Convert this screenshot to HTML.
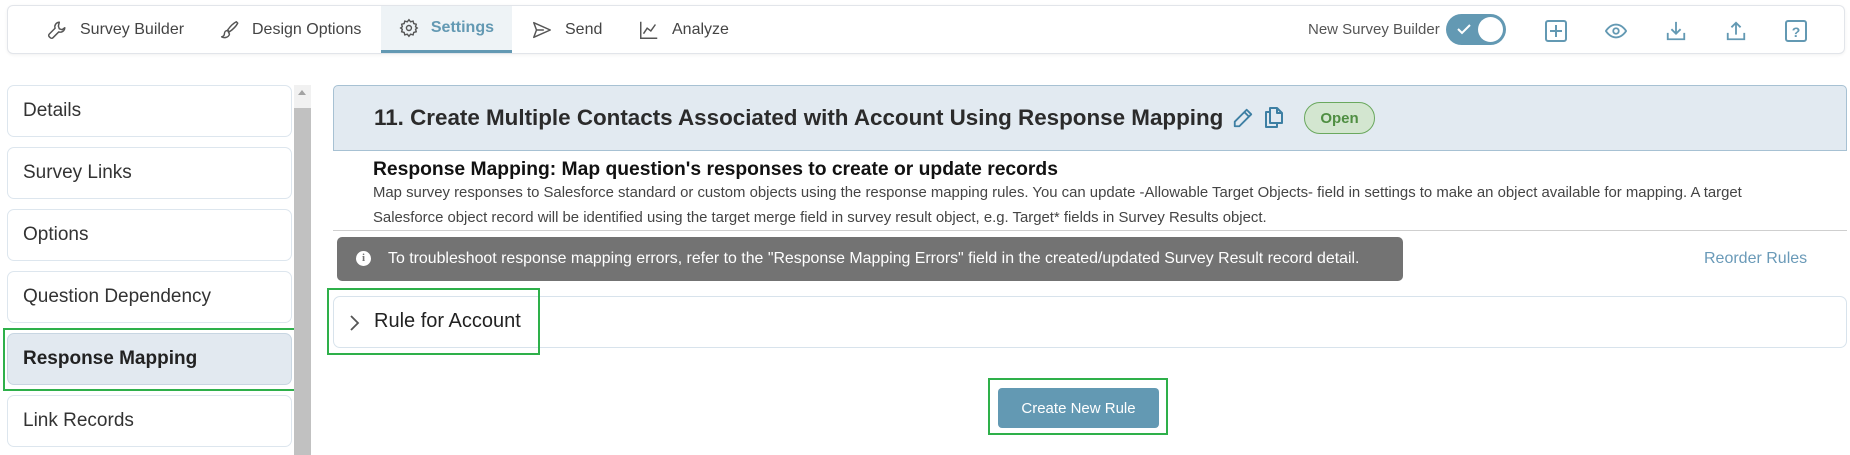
<!DOCTYPE html>
<html><head><meta charset="utf-8"><style>
*{box-sizing:border-box;margin:0;padding:0}
body{width:1850px;height:455px;background:#fff;font-family:"Liberation Sans",sans-serif;color:#333;position:relative;overflow:hidden}
.abs{position:absolute}
.nav{left:7px;top:5px;width:1838px;height:49px;border:1px solid #e2e5ea;border-radius:6px;background:#fff;box-shadow:0 1px 3px rgba(0,0,0,.06)}
.tab{position:absolute;top:0;height:47px;display:flex;align-items:center;font-size:16px;color:#444}
.tab svg{margin-right:12px}
.set{background:#eef3f6;border-bottom:3px solid #6399b3;color:#6399b3;font-weight:bold;padding:0 18px 0 18px}
.side{left:7px;width:285px;height:52px;border:1px solid #dde6ee;border-radius:7px;font-size:19px;color:#333;padding-left:15px;display:flex;align-items:center;background:#fff}
.gbox{border:2px solid #2eb04a}
.ic{position:absolute;top:14px}
</style></head><body>
<div class="abs nav">
 <div class="tab" style="left:38px"><svg width="22" height="22" viewBox="0 0 24 24" fill="none" stroke="#555" stroke-width="1.6" stroke-linejoin="round"><path d="M14.5 3.5a5 5 0 0 0-4.6 6.6L3.5 16.5a2 2 0 0 0 0 2.8l1.2 1.2a2 2 0 0 0 2.8 0l6.4-6.4a5 5 0 0 0 6.6-4.6l-3 2.2-3-1-1-3z"/></svg>Survey Builder</div>
 <div class="tab" style="left:210px"><svg width="22" height="22" viewBox="0 0 24 24" fill="none" stroke="#555" stroke-width="1.6" stroke-linejoin="round"><path d="M20 3c-3 1.5-7 5.5-9.5 9l2 2c3.5-2.5 7.5-6.5 9-9.5z M10.5 12.5c-2 0-3.5 1.5-3.5 3.5 0 1.5-1 3-3 3.5 2.5 1.5 7.5 1 8.5-3z"/></svg>Design Options</div>
 <div class="tab set" style="left:373px;width:131px"><svg width="20" height="20" viewBox="0 0 24 24" fill="none" stroke="#555" stroke-width="1.7"><circle cx="12" cy="12" r="3"/><path d="M12 2l2 2.5 3-.8.8 3 3 .8-.8 3L22 12l-2 1.5.8 3-3 .8-.8 3-3-.8L12 22l-2-2.5-3 .8-.8-3-3-.8.8-3L2 12l2-1.5-.8-3 3-.8.8-3 3 .8z"/></svg>Settings</div>
 <div class="tab" style="left:523px"><svg width="22" height="22" viewBox="0 0 24 24" fill="none" stroke="#555" stroke-width="1.6" stroke-linejoin="round"><path d="M3 4l18 8-18 8 3-8zM6 12h8"/></svg>Send</div>
 <div class="tab" style="left:630px"><svg width="22" height="22" viewBox="0 0 24 24" fill="none" stroke="#555" stroke-width="1.6"><path d="M3 3v18h18M6 16l4-6 4 3 5-7"/></svg>Analyze</div>
 <div class="tab" style="left:1300px;font-size:15px;color:#555">New Survey Builder</div>
 <div class="abs" style="left:1438px;top:8px;width:60px;height:31px;border-radius:16px;background:#6399b3">
  <svg class="abs" style="left:10px;top:8px" width="16" height="14" viewBox="0 0 16 14" fill="none" stroke="#fff" stroke-width="2"><path d="M2 7l4 4 8-8"/></svg>
  <div class="abs" style="right:3px;top:3px;width:25px;height:25px;border-radius:50%;background:#fff"></div></div>
 <svg class="ic" style="left:1537px" width="22" height="22" viewBox="0 0 22 22" fill="none" stroke="#6399b3" stroke-width="2"><rect x="1" y="1" width="20" height="20" rx="2"/><path d="M11 5v12M5 11h12"/></svg>
 <svg class="ic" style="left:1597px" width="22" height="22" viewBox="0 0 24 24" fill="none" stroke="#6399b3" stroke-width="2"><path d="M1 12s4-7 11-7 11 7 11 7-4 7-11 7S1 12 1 12z"/><circle cx="12" cy="12" r="3"/></svg>
 <svg class="ic" style="left:1657px" width="22" height="22" viewBox="0 0 24 24" fill="none" stroke="#6399b3" stroke-width="2"><path d="M3 14v7h18v-7M12 2v13M7 10l5 5 5-5"/></svg>
 <svg class="ic" style="left:1717px" width="22" height="22" viewBox="0 0 24 24" fill="none" stroke="#6399b3" stroke-width="2"><path d="M3 14v7h18v-7M12 16V3M7 8l5-5 5 5"/></svg>
 <svg class="ic" style="left:1777px" width="22" height="22" viewBox="0 0 22 22" fill="none" stroke="#6399b3" stroke-width="2"><rect x="1" y="1" width="20" height="20" rx="2"/><text x="11" y="17" text-anchor="middle" font-size="14" font-family="Liberation Sans" font-weight="bold" fill="#6399b3" stroke="none">?</text></svg>
</div>

<div class="abs side" style="top:85px">Details</div>
<div class="abs side" style="top:147px">Survey Links</div>
<div class="abs side" style="top:209px">Options</div>
<div class="abs side" style="top:271px">Question Dependency</div>
<div class="abs side" style="top:333px;background:#e2e9f0;font-weight:bold;color:#222;border-color:#c8d6e2">Response Mapping</div>
<div class="abs side" style="top:395px">Link Records</div>
<div class="abs gbox" style="left:3px;top:328px;width:297px;height:63px"></div>
<div class="abs" style="left:294px;top:85px;width:17px;height:370px;background:#f1f1f1"></div>
<div class="abs" style="left:298px;top:90px;width:0;height:0;border-left:4px solid transparent;border-right:4px solid transparent;border-bottom:5px solid #a3a3a3"></div>
<div class="abs" style="left:294px;top:108px;width:17px;height:347px;background:#c1c1c1"></div>

<div class="abs" style="left:333px;top:85px;width:1514px;height:66px;background:#e2eaf1;border:1px solid #a7c1d3;border-radius:5px 5px 0 0"></div>
<div class="abs" style="left:374px;top:105px;font-size:22.4px;font-weight:bold;color:#2b2b2b;white-space:nowrap">11. Create Multiple Contacts Associated with Account Using Response Mapping</div>
<svg class="abs" style="left:1232px;top:107px" width="22" height="22" viewBox="0 0 24 24" fill="none" stroke="#3d7fa3" stroke-width="2" stroke-linejoin="round"><path d="M16 3l5 5L8 21H3v-5z M13.5 5.5l5 5"/></svg>
<svg class="abs" style="left:1263px;top:105px" width="22" height="24" viewBox="0 0 22 24" fill="none" stroke="#3d7fa3" stroke-width="2" stroke-linejoin="round"><path d="M7 3h7l5 5v10H7z M14 3v5h5 M7 7H3v15h11v-4"/></svg>
<div class="abs" style="left:1304px;top:102px;width:71px;height:32px;border:1px solid #6aa85e;border-radius:16px;background:#d3e6d0;color:#4f8e42;font-size:15px;font-weight:bold;display:flex;align-items:center;justify-content:center">Open</div>

<div class="abs" style="left:373px;top:159px;font-size:19.3px;font-weight:bold;color:#111">Response Mapping: Map question's responses to create or update records</div>
<div class="abs" style="left:373px;top:181px;font-size:14.9px;color:#444;line-height:25px;width:1470px">Map survey responses to Salesforce standard or custom objects using the response mapping rules. You can update -Allowable Target Objects- field in settings to make an object available for mapping. A target<br>Salesforce object record will be identified using the target merge field in survey result object, e.g. Target* fields in Survey Results object.</div>
<div class="abs" style="left:333px;top:230px;width:1514px;height:1px;background:#cfcfcf"></div>

<div class="abs" style="left:337px;top:237px;width:1066px;height:44px;background:#737373;border-radius:5px;color:#fff;font-size:15.9px;display:flex;align-items:center;padding-left:51px;white-space:nowrap">To troubleshoot response mapping errors, refer to the "Response Mapping Errors" field in the created/updated Survey Result record detail.</div>
<div class="abs" style="left:356px;top:251px;width:15px;height:15px;border-radius:50%;background:#fff;color:#737373;font-size:11px;font-weight:bold;text-align:center;line-height:15px;font-family:'Liberation Serif',serif">i</div>
<div class="abs" style="left:1704px;top:250px;font-size:16px;color:#6a9ab8">Reorder Rules</div>

<div class="abs" style="left:333px;top:296px;width:1514px;height:52px;border:1px solid #d8e3ec;border-radius:7px"></div>
<svg class="abs" style="left:348px;top:314px" width="12" height="18" viewBox="0 0 12 18" fill="none" stroke="#555" stroke-width="1.8"><path d="M3 2l7 7-7 7"/></svg>
<div class="abs" style="left:374px;top:310px;font-size:20px;color:#222">Rule for Account</div>
<div class="abs gbox" style="left:327px;top:288px;width:213px;height:67px"></div>

<div class="abs" style="left:998px;top:388px;width:161px;height:40px;background:#6399b3;border-radius:4px;color:#fff;font-size:15px;display:flex;align-items:center;justify-content:center">Create New Rule</div>
<div class="abs gbox" style="left:988px;top:378px;width:180px;height:57px"></div>
</body></html>
